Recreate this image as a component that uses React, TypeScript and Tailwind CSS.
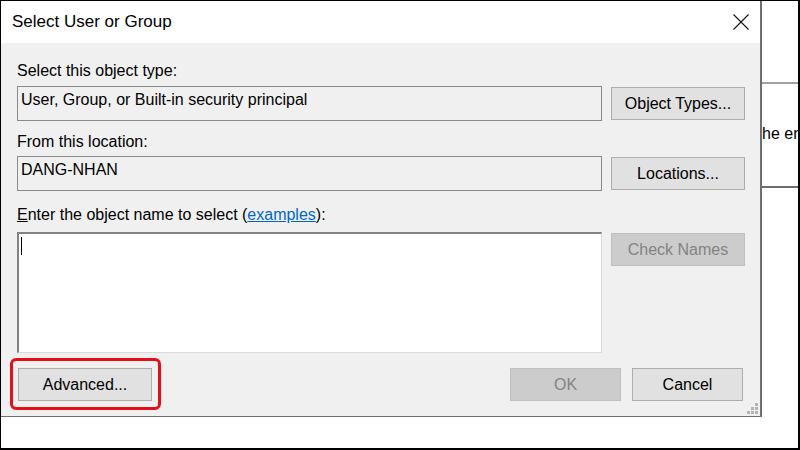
function CloseIcon() {
  return (
    <svg width="16" height="16" viewBox="0 0 16 16" className="block">
      <path d="M0.5 0.5 L15.5 15.5 M15.5 0.5 L0.5 15.5" stroke="#111" strokeWidth="1.1" fill="none" />
    </svg>
  );
}

function Grip() {
  const dots = [
    [8, 0],
    [4, 4],
    [8, 4],
    [0, 8],
    [4, 8],
    [8, 8],
  ];
  return (
    <svg width="11" height="11" viewBox="0 0 11 11" className="block">
      {dots.map(([x, y], i) => (
        <rect key={i} x={x} y={y} width="3" height="3" fill="#b4b4b4" />
      ))}
    </svg>
  );
}

function Btn({ label, disabled, w }: { label: string; disabled?: boolean; w: string }) {
  return (
    <div
      className={
        disabled
          ? `${w} h-[33px] flex items-center justify-center bg-[#cccccc] border border-[#bfbfbf] text-[#838383] text-[16px]`
          : `${w} h-[33px] flex items-center justify-center bg-[#e1e1e1] border border-[#adadad] text-black text-[16px]`
      }
    >
      {label}
    </div>
  );
}

function ReadBox({ text }: { text: string }) {
  return (
    <div className="w-[585px] h-[35px] border border-[#8a8a8a] bg-[#f0f0f0] pl-[3px] pt-[4px] text-[16px] leading-[18px] text-black">
      {text}
    </div>
  );
}

export default function App() {
  return (
    <div
      className="w-[800px] h-[450px] bg-white border-t border-l border-r-2 border-b-2 border-black flex flex-col overflow-hidden"
      style={{ fontFamily: '"Liberation Sans", Arial, sans-serif' }}
    >
      <div className="flex">
        {/* dialog */}
        <div className="w-[761px] h-[416px] flex flex-col border-r-2 border-b border-[#6f6f6f]">
          <div className="h-[42px] bg-white flex items-center justify-between pl-[11px] pr-[11px]">
            <span className="text-[17px] text-black">Select User or Group</span>
            <CloseIcon />
          </div>
          <div className="relative flex-1 bg-[#f0f0f0] pl-[16px] pt-[19px] text-[16px] leading-[18px] text-black">
            <div>Select this object type:</div>
            <div className="mt-[6px] flex gap-[9px]">
              <ReadBox text="User, Group, or Built-in security principal" />
              <div className="mt-[1px]">
                <Btn label="Object Types..." w="w-[134px]" />
              </div>
            </div>

            <div className="mt-[12px]">From this location:</div>
            <div className="mt-[5px] flex gap-[9px]">
              <ReadBox text="DANG-NHAN" />
              <div className="mt-[1px]">
                <Btn label="Locations..." w="w-[134px]" />
              </div>
            </div>

            <div className="mt-[15px]">
              <span className="underline">E</span>nter the object name to select (
              <span className="text-[#0066cc] underline">examples</span>):
            </div>
            <div className="mt-[8px] flex gap-[9px]">
              <div className="w-[585px] h-[121px] bg-white border-t-2 border-l-2 border-r border-b border-t-[#828282] border-l-[#828282] border-r-[#dadada] border-b-[#dadada] pl-[2px] pt-[3px]">
                <div className="w-px h-[18px] bg-black" />
              </div>
              <div className="mt-[1px]">
                <Btn label="Check Names" disabled w="w-[134px]" />
              </div>
            </div>

            <div className="mt-[15px] flex items-center pr-[17px]">
              <div className="relative ml-[1px]">
                <Btn label="Advanced..." w="w-[134px]" />
                <div className="absolute -left-[8px] -top-[10px] w-[151px] h-[52px] border-[3px] border-[#e3101b] rounded-[6px]" />
              </div>
              <div className="ml-auto flex gap-[11px]">
                <Btn label="OK" disabled w="w-[111px]" />
                <Btn label="Cancel" w="w-[111px]" />
              </div>
            </div>

            <div className="absolute right-[2px] bottom-[2px]">
              <Grip />
            </div>
          </div>
        </div>

        {/* background window behind dialog */}
        <div className="flex-1 flex flex-col overflow-hidden">
          <div className="h-[81px]" />
          <div className="h-[2px] bg-[#a0a0a0]" />
          <div className="h-[102px] flex items-center whitespace-nowrap text-[16px] text-black pb-[2px]">
            he er
          </div>
          <div className="h-[2px] bg-[#6d6d6d]" />
        </div>
      </div>
      <div className="flex-1 bg-white" />
    </div>
  );
}
